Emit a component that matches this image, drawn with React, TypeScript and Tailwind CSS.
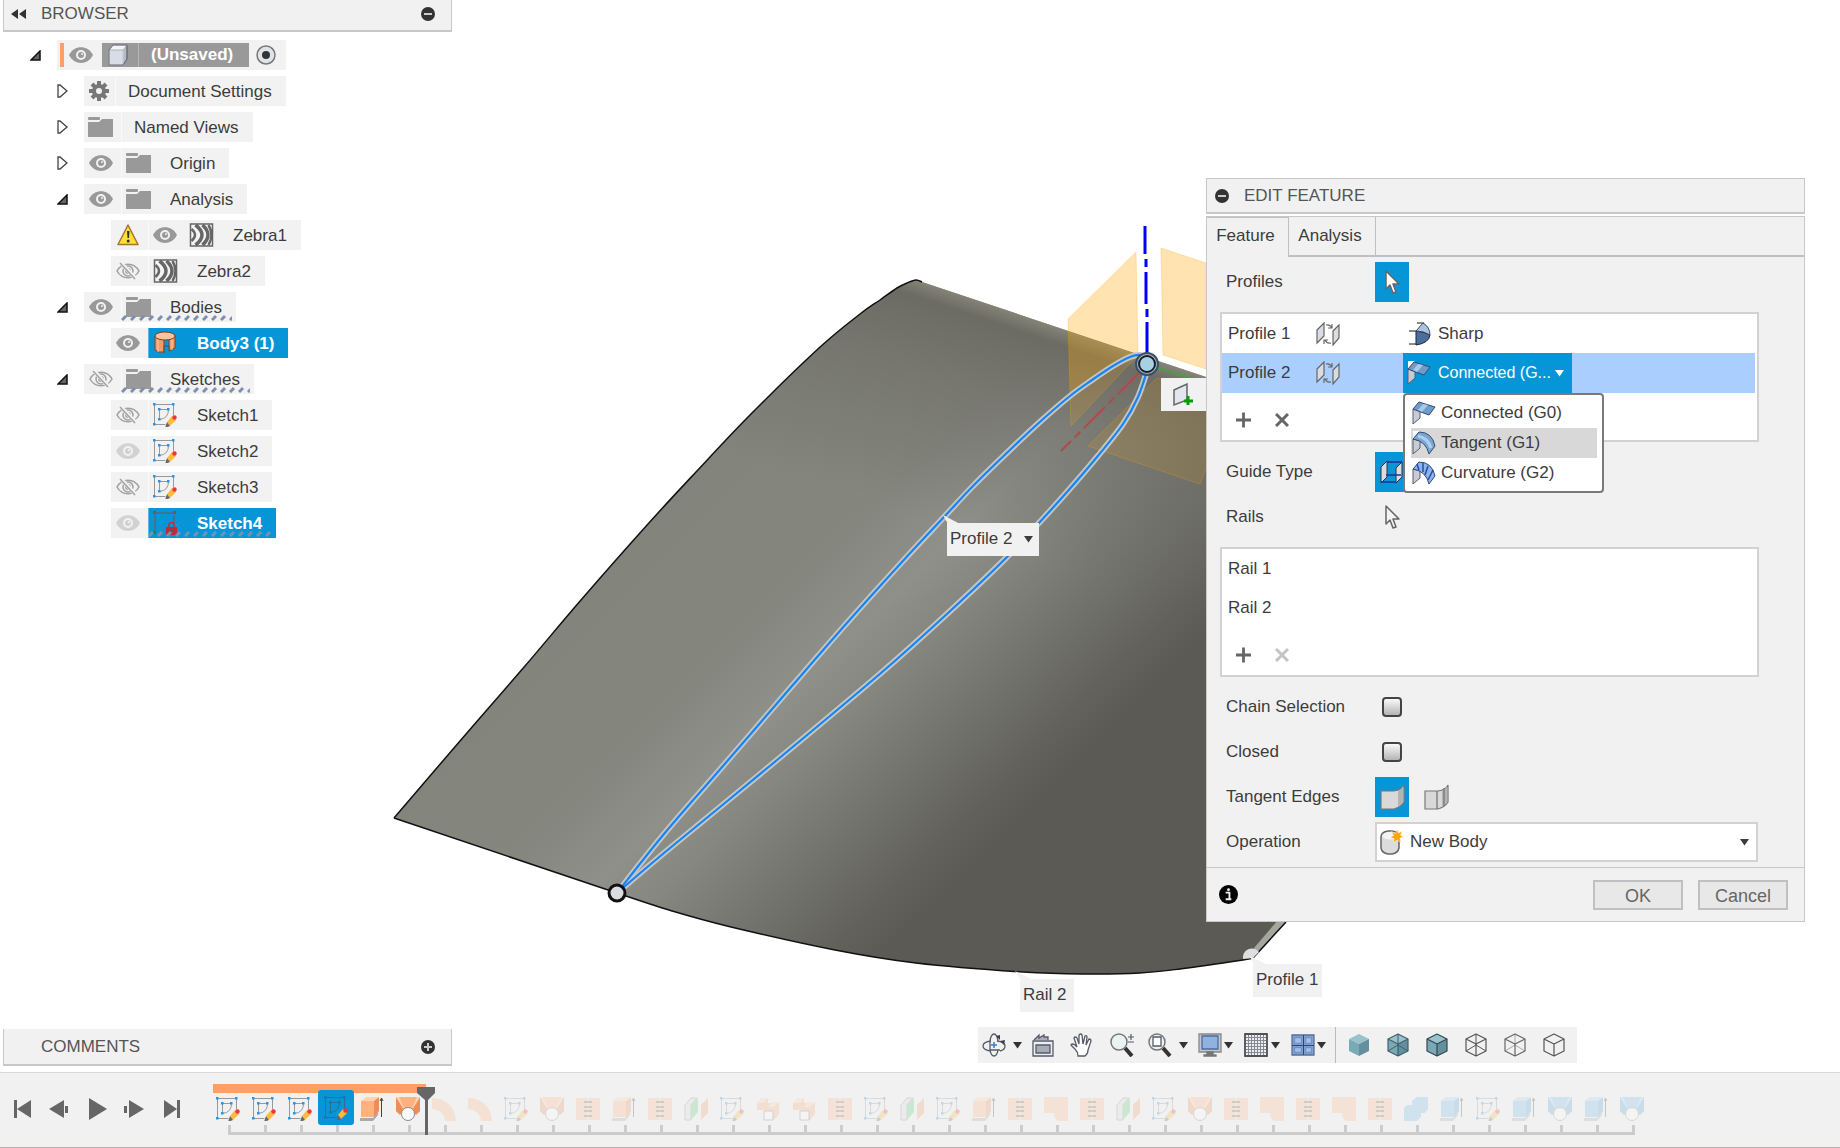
import { useState } from "react";
import type { ReactNode } from "react";
import clsx from "clsx";

type Point = [number, number];

/** Catmull-Rom spline through the points, as an SVG path */
function smoothPath(points: Point[], start = "M"): string {
  let d = `${start}${points[0][0]} ${points[0][1]}`;
  for (let i = 0; i < points.length - 1; i++) {
    const p0 = points[i - 1] ?? points[i];
    const p1 = points[i];
    const p2 = points[i + 1];
    const p3 = points[i + 2] ?? p2;
    const c1 = [p1[0] + (p2[0] - p0[0]) / 6, p1[1] + (p2[1] - p0[1]) / 6];
    const c2 = [p2[0] - (p3[0] - p1[0]) / 6, p2[1] - (p3[1] - p1[1]) / 6];
    d += `C${c1[0]} ${c1[1]} ${c2[0]} ${c2[1]} ${p2[0]} ${p2[1]}`;
  }
  return d;
}

const LEFT_EDGE: Point[] = [
  [394, 818], [460, 741], [525, 666], [581, 600], [648, 524], [696, 472], [750, 415],
  [819, 348], [860, 314], [880, 300], [897, 288], [907, 283], [916, 280], [922, 282],
];

const BOTTOM_EDGE: Point[] = [
  [617, 893], [672, 911], [731, 927], [835, 950], [916, 963], [1023, 972],
  [1087, 974], [1140, 973], [1180, 969], [1243, 960], [1253, 958],
];

const LOOP_UPPER: Point[] = [
  [617, 893], [664, 834], [723, 766], [792, 686], [846, 624], [902, 562], [944, 517],
  [974, 485], [1013, 447], [1042, 420], [1070, 396], [1092, 380], [1113, 366], [1130, 357],
  [1140, 355], [1147, 358],
];

const LOOP_LOWER: Point[] = [
  [1148, 368], [1138, 397], [1123, 424], [1097, 457], [1067, 492], [1038, 524], [1004, 560],
  [948, 613], [881, 673], [771, 765], [664, 853], [617, 893],
];

const SURFACE = `${smoothPath(LEFT_EDGE)}L1206 377L1320 415V880L1286 922L1253 958${smoothPath(
  [...BOTTOM_EDGE].reverse(),
  "L"
)}Z`;

function Scene() {
  const upper = smoothPath(LOOP_UPPER);
  const lower = smoothPath(LOOP_LOWER);
  return (
    <svg className="absolute inset-0 h-full w-full" aria-hidden="true">
      <defs>
        <linearGradient id="body" gradientUnits="userSpaceOnUse" x1="560" y1="571" x2="910" y2="928">
          <stop offset="0" stopColor="#82837b" />
          <stop offset="0.35" stopColor="#85867e" />
          <stop offset="0.5" stopColor="#8f9089" />
          <stop offset="0.6" stopColor="#86877f" />
          <stop offset="0.79" stopColor="#70716a" />
          <stop offset="0.92" stopColor="#62625b" />
          <stop offset="1" stopColor="#5b5a54" />
        </linearGradient>
        <linearGradient id="top" gradientUnits="userSpaceOnUse" x1="1000" y1="308" x2="928" y2="522">
          <stop offset="0" stopColor="#858376" stopOpacity="0.9" />
          <stop offset="0.07" stopColor="#68675f" stopOpacity="0.85" />
          <stop offset="0.4" stopColor="#6a6a63" stopOpacity="0.5" />
          <stop offset="1" stopColor="#6a6a63" stopOpacity="0" />
        </linearGradient>
      </defs>

      <path d={SURFACE} fill="url(#body)" />
      <path d={SURFACE} fill="url(#top)" />
      <path d="M1286 922l-30 32-2-6 24-28z" fill="#a5a69c" />

      {/* Origin planes */}
      <g fill="#ffa500" stroke="#ffa500" strokeOpacity="0.25">
        <path d="M1068 319L1136 252L1138 353L1113 366L1070 396Z" fillOpacity="0.3" />
        <path d="M1161 248L1206 263V369L1163 355Z" fillOpacity="0.3" />
        <path d="M1070 396L1113 366L1136 357L1071 426Z" fillOpacity="0.16" />
        <path d="M1157 378L1230 402L1200 484L1088 446Z" fillOpacity="0.13" />
      </g>

      {/* Axes */}
      <path d="M1139 373L1061 451" stroke="#b04a46" strokeWidth="2" strokeDasharray="30 5 8 5" />
      <path d="M1158 368L1190 378" stroke="#4c9c48" strokeWidth="2" />
      <path
        d="M1145 226v28M1146 259v8M1146 272v32M1147 309v8M1147 322v32"
        stroke="#0000ff"
        strokeWidth="3"
      />

      {/* Edges */}
      <g fill="none" stroke="#111" strokeWidth="1.500" strokeLinejoin="round">
        <path d={smoothPath(LEFT_EDGE)} />
        <path d={`M394 818${smoothPath(BOTTOM_EDGE, "L")}L1286 922`} />
      </g>
      <g fill="none" stroke="#c4c6c4" strokeWidth="6">
        <path d={upper} />
        <path d={lower} />
      </g>
      <g fill="none" stroke="#1684f5" strokeWidth="2.200">
        <path d={upper} />
        <path d={lower} />
      </g>

      <circle cx="617" cy="893" r="8" fill="#d9dde0" stroke="#111" strokeWidth="3" />
      <circle cx="1147" cy="364" r="11" fill="#a9b8c2" stroke="#3b5068" strokeWidth="2" />
      <circle cx="1147" cy="364" r="8" fill="#a9d0e2" stroke="#15202b" strokeWidth="2" />
      <path d="M1243 959a9 9 0 0 1 16 -7l-6 6z" fill="#dedede" />

      {/* Callout tails */}
      <g fill="#f1f1f1">
        <path d="M943 515L960 524H948z" />
        <path d="M1015 971L1034 980H1021z" />
        <path d="M1250 956L1268 965H1254z" />
      </g>
    </svg>
  );
}

/* ---------- Small shared icons ---------- */

function Caret({ className }: { className?: string }) {
  return (
    <svg width="9" height="8" viewBox="0 0 9 8" className={clsx("shrink-0", className)}>
      <path d="M0 1h9L4.500 7.500z" fill="currentColor" />
    </svg>
  );
}

function RoundSign({ plus }: { plus?: boolean }) {
  return (
    <svg width="14" height="14" viewBox="0 0 14 14">
      <circle cx="7" cy="7" r="7" fill="#333" />
      <path d={plus ? "M3 7h8M7 3v8" : "M3 7h8"} stroke="#ccc" strokeWidth="2" />
    </svg>
  );
}

function Eye({ faded }: { faded?: boolean }) {
  const color = faded ? "#d2d2d2" : "#999";
  return (
    <svg width="24" height="16" viewBox="0 0 24 16">
      <path d="M0 8C5-2.500 19-2.500 24 8 19 18.500 5 18.500 0 8z" fill={color} />
      <circle cx="12" cy="8" r="4" fill={color} stroke="#f2f2f2" strokeWidth="2" />
      <circle cx="13" cy="7" r="1" fill="#f2f2f2" />
    </svg>
  );
}

function EyeOff() {
  return (
    <svg width="24" height="18" viewBox="0 0 24 18" fill="none" stroke="#a0a0a0" strokeWidth="1.500">
      <path d="M1 9C6 0 18 0 23 9 18 18 6 18 1 9z" />
      <circle cx="12" cy="9" r="5" />
      <circle cx="12" cy="9" r="2.200" />
      <path d="M5 1l15 16" stroke="#f2f2f2" strokeWidth="4" />
      <path d="M4 1l15 16" />
    </svg>
  );
}

function Folder() {
  return (
    <svg width="25" height="20" viewBox="0 0 25 20" fill="#999">
      <rect x="0" y="0" width="12" height="3" rx="1" />
      <path d="M0 5h11l3-3h11v18H0z" />
    </svg>
  );
}

function Gear() {
  return (
    <svg width="20" height="20" viewBox="0 0 20 20">
      <g stroke="#777" strokeWidth="4">
        <path d="M10 0v20M0 10h20M3 3l14 14M17 3L3 17" />
      </g>
      <circle cx="10" cy="10" r="7" fill="#777" />
      <circle cx="10" cy="10" r="3" fill="#f2f2f2" />
    </svg>
  );
}

function Zebra() {
  return (
    <svg width="25" height="24" viewBox="0 0 24 24" fill="none" stroke="#666">
      <rect x="1" y="1" width="22" height="22" fill="#f4f4f4" strokeWidth="1.500" />
      <path d="M2 6q7 6 0 12" strokeWidth="2.500" />
      <path d="M6 2q13 10 0 20" strokeWidth="3.500" />
      <path d="M13 2q11 10 0 20" strokeWidth="3.500" />
      <path d="M19 2q6 10 0 20" strokeWidth="2.500" />
    </svg>
  );
}

function Warning() {
  return (
    <svg width="22" height="22" viewBox="0 0 22 22">
      <path d="M11 1L21 20.500H1z" fill="#ffdf35" stroke="#a5762d" strokeWidth="1.500" strokeLinejoin="round" />
      <path d="M10 7h2.500l-.5 7h-1.500z" fill="#333" />
      <circle cx="11.200" cy="17" r="1.500" fill="#333" />
    </svg>
  );
}

function Body() {
  return (
    <svg width="24" height="24" viewBox="0 0 24 24" stroke="#7b4020">
      <path d="M2 5v14q3 3 9 2V8h5v12l6-3V5z" fill="#f29b68" />
      <path d="M5 7v14M19 7v12" stroke="#ffc9a5" />
      <ellipse cx="12" cy="5" rx="10" ry="4" fill="#ffc49c" />
      <path d="M11 22v-7h5v5" fill="#0696d7" />
    </svg>
  );
}

function Cube() {
  return (
    <svg width="22" height="22" viewBox="0 0 22 22" stroke="#6b7078" strokeLinejoin="round">
      <path d="M2 6L6 1h14v14l-4 6H2z" fill="#b5bac4" />
      <path d="M2 6h14v15H2z" fill="#d7dce6" stroke="#c5cad4" />
      <path d="M2 6L6 1h14l-4 5z" fill="#f2f4f8" stroke="#aeb3bb" />
      <path d="M2 6L6 1h14v14l-4 6H2z" fill="none" />
    </svg>
  );
}

function Sketch({ dark }: { dark?: boolean }) {
  const line = dark ? "#2f6d92" : "#999";
  const dot = dark ? "#1676b5" : "#2196f3";
  return (
    <svg width="24" height="24" viewBox="0 0 24 24">
      <g fill="none" stroke={line} strokeWidth="1">
        <path d="M1.500 1.500h19M1.500 1.500v20M20.500 1.500v11M1.500 21.500h11" />
        <path d="M6.500 6.500h9M6.500 6.500v10M6.500 16.500q9-1 9-10" />
      </g>
      <path
        d="M0 0h2.500v2.500H0zM19 0h2.500v2.500h-2.500zM0 20h2.500v2.500H0zM5 5h2.500v2.500H5zM14 5h2.500v2.500h-2.500zM5 15h2.500v2.500H5z"
        fill={dot}
      />
      <path d="M19 13l4 4-6 6-3-4z" fill="#fdbb3c" />
      <path d="M14 19l3 4-5 2z" fill="#666" />
      <circle cx="21.500" cy="14.500" r="2.200" fill="#f4323c" />
    </svg>
  );
}

function SketchLocked() {
  return (
    <svg width="25" height="24" viewBox="0 0 25 24" fill="none">
      <path d="M2 2h18M2 4v18M21 4v9" stroke="#56697a" strokeWidth="1.500" />
      <path d="M0 0h3v3H0zM20 0h3v3h-3zM0 20h3v3H0z" fill="#6b5a5a" />
      <path d="M16 16v-3q2.500-3 5 0v3" stroke="#d6202c" strokeWidth="1.500" />
      <rect x="13" y="16" width="11" height="8" fill="#c3283a" />
      <rect x="17" y="18" width="3" height="3" fill="#5a4d8b" />
    </svg>
  );
}

/* ---------- Browser tree ---------- */

interface TreeRow {
  label: string;
  level: 1 | 2;
  open?: boolean;
  icons: ReactNode[];
  narrow?: boolean;
  hatched?: boolean;
  selected?: boolean;
}

const TREE: TreeRow[] = [
  { label: "Document Settings", level: 1, open: false, icons: [<Gear />], narrow: true },
  { label: "Named Views", level: 1, open: false, icons: [<Folder />] },
  { label: "Origin", level: 1, open: false, icons: [<Eye />, <Folder />] },
  { label: "Analysis", level: 1, open: true, icons: [<Eye />, <Folder />] },
  { label: "Zebra1", level: 2, icons: [<Warning />, <Eye />, <Zebra />] },
  { label: "Zebra2", level: 2, icons: [<EyeOff />, <Zebra />] },
  { label: "Bodies", level: 1, open: true, icons: [<Eye />, <Folder />], hatched: true },
  { label: "Body3 (1)", level: 2, icons: [<Eye />, <Body />], selected: true },
  { label: "Sketches", level: 1, open: true, icons: [<EyeOff />, <Folder />], hatched: true },
  { label: "Sketch1", level: 2, icons: [<EyeOff />, <Sketch />] },
  { label: "Sketch2", level: 2, icons: [<Eye faded />, <Sketch />] },
  { label: "Sketch3", level: 2, icons: [<EyeOff />, <Sketch />] },
  { label: "Sketch4", level: 2, icons: [<Eye faded />, <SketchLocked />], selected: true, hatched: true },
];

function Expander({ open }: { open: boolean }) {
  return (
    <button type="button" aria-label={open ? "Collapse" : "Expand"} className="flex w-[11px] justify-center">
      {open ? (
        <svg width="11" height="11" viewBox="0 0 11 11">
          <path d="M10 1v9H1z" fill="#666" stroke="#111" strokeWidth="1.500" />
        </svg>
      ) : (
        <svg width="11" height="14" viewBox="0 0 11 14">
          <path d="M1 1h2l7 6-7 6H1z" fill="#fff" stroke="#444" strokeWidth="1.300" />
        </svg>
      )}
    </button>
  );
}

function Hatch() {
  return (
    <svg className="absolute bottom-[1px] left-[37px] h-[7px] w-[calc(100%-41px)]">
      <defs>
        <pattern id="hatch" width="9" height="7" patternUnits="userSpaceOnUse">
          <path d="M1 6l4-4" stroke="#7d8fb0" strokeWidth="3" />
        </pattern>
      </defs>
      <rect width="100%" height="7" fill="url(#hatch)" />
    </svg>
  );
}

function Row({ row }: { row: TreeRow }) {
  const [first, ...rest] = row.icons;
  return (
    <li className={clsx("flex h-[30px] items-center", row.level === 1 ? "pl-[54px]" : "pl-[108px]")}>
      {row.open !== undefined && <Expander open={row.open} />}
      <div className={clsx("relative flex h-full bg-[#f2f2f2]", row.level === 1 && "ml-4")}>
        <span
          className={clsx(
            "flex items-center justify-center",
            row.narrow ? "w-[31px] pr-[2px]" : "w-[37px] pr-1"
          )}
        >
          {first}
        </span>
        <span
          className={clsx(
            "flex items-center border-l pr-[14px]",
            row.selected ? "border-[#5ab8e6] bg-[#0696d7] font-bold text-white" : "border-[#fafafa]"
          )}
        >
          {rest.map((icon, i) => (
            <span key={i} className="flex w-9 items-center justify-center pr-1">
              {icon}
            </span>
          ))}
          <span className="pt-[1px] pl-3">{row.label}</span>
        </span>
        {row.hatched && <Hatch />}
      </div>
    </li>
  );
}

function Browser() {
  return (
    <section>
      <header className="flex h-8 items-center border border-t-0 border-b-2 border-[#c8c8c8] bg-[#f1f1f1] pr-[16px] pb-[3px] pl-[7px]">
        <button type="button" aria-label="Collapse browser">
          <svg width="15" height="10" viewBox="0 0 15 10" fill="#333">
            <path d="M7 0v10L0 5zM15 0v10L8 5z" />
          </svg>
        </button>
        <h2 className="ml-[15px] flex-1 text-[#555]">BROWSER</h2>
        <button type="button" aria-label="Minimize">
          <RoundSign />
        </button>
      </header>
      <ul className="mt-2 flex flex-col gap-[6px]">
        <li className="flex h-[30px] items-center pl-[27px]">
          <Expander open />
          <div className="ml-4 flex h-full items-center bg-[#f2f2f2] pl-[3px]">
            <span className="h-6 w-1 bg-[#ff9f68]" />
            <span className="flex w-[38px] justify-center pr-1">
              <Eye />
            </span>
            <span className="flex h-6 items-center bg-[#999] font-bold text-white">
              <span className="flex h-full w-[37px] items-center justify-center border-r border-[#b5b5b5] pr-1">
                <Cube />
              </span>
              <span className="pr-[16px] pl-3">(Unsaved)</span>
            </span>
            <span className="flex w-[37px] justify-center pr-1">
              <svg width="20" height="20" viewBox="0 0 20 20">
                <circle cx="10" cy="10" r="9" fill="#dfe3ea" stroke="#777" strokeWidth="1.500" />
                <circle cx="10" cy="10" r="4" fill="#333" />
              </svg>
            </span>
          </div>
        </li>
        {TREE.map((row) => (
          <Row key={row.label} row={row} />
        ))}
      </ul>
    </section>
  );
}

/* ---------- Edit feature dialog ---------- */

function CursorArrow({ filled }: { filled?: boolean }) {
  return (
    <svg width="15" height="24" viewBox="0 0 15 24">
      <path
        d="M1 1v18l4-4 3 8 3-1-3-8h6z"
        fill={filled ? "#fff" : "#f4f4f4"}
        stroke="#666"
        strokeWidth="1.500"
        strokeLinejoin="round"
      />
    </svg>
  );
}

function Flip() {
  return (
    <svg width="24" height="24" viewBox="0 0 24 24" stroke="#666" strokeWidth="1.200" fill="#d9dce2">
      <path d="M1 8l7-7v13l-7 7zM17 9l6-6v13l-6 7z" />
      <path d="M10 3q4-1 6 3M16 2v4h-4M15 21q-4 1-6-3M8 22v-4h4" fill="none" />
    </svg>
  );
}

function Sharp() {
  return (
    <svg width="22" height="24" viewBox="0 0 22 24">
      <path d="M0 9h9M0 22h9M8 1h7" stroke="#666" strokeWidth="1.500" />
      <path d="M7 9q9 1 14 4-1 8-14 10z" fill="#4a6f9c" stroke="#223" />
      <path d="M7 9L14 1q7 4 7 12-6-4-14-4z" fill="#a6c4e6" stroke="#445" />
    </svg>
  );
}

function Continuity({ kind }: { kind: "g0" | "g1" | "g2" }) {
  return (
    <svg width="24" height="24" viewBox="0 0 24 24" strokeLinejoin="round" className="shrink-0">
      <path d="M1 0h7L1 8z" fill="#fff" />
      <path d="M1 8l7 2v7l-7 6z" fill="#c9ccd4" stroke="#555b68" />
      {kind === "g0" ? (
        <>
          <path d="M1 8L7 1l16 5-6 8L6 10z" fill="#6f9bcb" stroke="#2f4d72" />
          <path d="M11 3L6 9l4 2 6-7z" fill="#a9c9ea" />
        </>
      ) : (
        <>
          <path
            d="M1 8L7 1q13 0 16 14l-6 8Q14 10 1 8z"
            fill={kind === "g1" ? "#7ba6d4" : "#8fb2ea"}
            stroke="#2f4d72"
          />
          {kind === "g1" ? (
            <path d="M6 5q10 2 13 12" fill="none" stroke="#b0cfee" strokeWidth="3" />
          ) : (
            <path d="M5 3l2 6M11 2v9M16 5l-3 9M21 9l-5 10" stroke="#1f4fae" strokeWidth="1.500" />
          )}
        </>
      )}
    </svg>
  );
}

function RailGuide() {
  return (
    <svg width="24" height="24" viewBox="0 0 24 24">
      <path d="M1 7l6-6v16l-6 6zM16 8l6-6v15l-6 6z" fill="#d9dce2" stroke="#333" />
      <path d="M7 2h15M1 22h15M6 15h15" stroke="#1d2f9e" strokeWidth="1.500" />
    </svg>
  );
}

function TangentEdge({ split }: { split?: boolean }) {
  return (
    <svg width="25" height="26" viewBox="0 0 25 26">
      <path d="M1 7h13q8-1 10-6v17q-3 5-10 7H1z" fill="#d9d9d9" stroke="#777" strokeWidth="1.200" />
      <path d="M18 7q4-2 5-5v16q-2 3-5 5z" fill="#b4b4b4" />
      {split && <path d="M13 7v18M20 4v18" stroke="#777" strokeWidth="1.300" />}
    </svg>
  );
}

function NewBody() {
  return (
    <svg width="24" height="26" viewBox="0 0 24 26">
      <path
        d="M2 8q0-5 7-6h4q7 1 7 6v11q-1 5-7 6H9q-6-1-7-6z"
        fill="#dcdcdc"
        stroke="#666"
        strokeWidth="1.500"
      />
      <path d="M3 8q8 5 16 0-1-5-8-5T3 8z" fill="#f3f3f3" />
      <path
        d="M18 0l1.500 4 4-2-2 4 3 2-3.500 1 1 4.500-4-2.500-3 3 0-4.500-4-1 3.500-2-2-4 4 2z"
        fill="#ffa50a"
        stroke="#fff"
        strokeWidth=".5"
      />
    </svg>
  );
}

function FormRow({ label, htmlFor, children }: { label: string; htmlFor?: string; children: ReactNode }) {
  return (
    <div className="flex h-10 items-center pl-[6px]">
      <label htmlFor={htmlFor} className="w-[149px]">
        {label}
      </label>
      {children}
    </div>
  );
}

function ListActions({ removable }: { removable?: boolean }) {
  return (
    <div className="flex items-center gap-[24px] px-[14px] pt-[19px]">
      <button type="button" aria-label="Add" className="text-[#666]">
        <svg width="15" height="16" viewBox="0 0 16 16" stroke="currentColor" strokeWidth="3">
          <path d="M8 0v16M0 8h16" />
        </svg>
      </button>
      <button
        type="button"
        aria-label="Remove"
        disabled={!removable}
        className={removable ? "text-[#666]" : "text-[#c4c4c4]"}
      >
        <svg width="14" height="14" viewBox="0 0 14 14" stroke="currentColor" strokeWidth="3">
          <path d="M1 1l12 12M13 1L1 13" />
        </svg>
      </button>
    </div>
  );
}

const CONTINUITY = [
  { kind: "g0", label: "Connected (G0)" },
  { kind: "g1", label: "Tangent (G1)" },
  { kind: "g2", label: "Curvature (G2)" },
] as const;

function ProfileList() {
  const [hovered, setHovered] = useState<string>("g1");
  return (
    <div className="my-[5px] h-[130px] w-[539px] border-2 border-[#d2d2d2] bg-white">
      <div className="flex h-[39px] items-center pl-[6px]">
        <span className="w-[88px]">Profile 1</span>
        <Flip />
        <span className="ml-[69px] flex items-center gap-[7px]">
          <Sharp />
          Sharp
        </span>
      </div>
      <div className="mr-[2px] flex h-10 items-center bg-[#aacfff] pl-[6px]">
        <span className="w-[88px]">Profile 2</span>
        <Flip />
        <div className="relative ml-[63px] h-10">
          <button
            type="button"
            aria-haspopup="listbox"
            aria-expanded="true"
            className="flex h-10 w-[169px] items-center justify-between bg-[#0696d7] pr-[8px] pl-1 text-base text-white"
          >
            <span className="flex items-center gap-[7px] whitespace-nowrap">
              <Continuity kind="g0" />
              Connected (G...
            </span>
            <Caret />
          </button>
          <ul
            role="listbox"
            className="absolute top-full left-0 z-10 w-[201px] rounded-sm border-2 border-[#7a7a7a] bg-white py-[3px] pr-[5px] pl-[6px]"
          >
            {CONTINUITY.map((item) => (
              <li
                key={item.kind}
                role="option"
                aria-selected={item.kind === "g0"}
                onMouseEnter={() => setHovered(item.kind)}
                className={clsx(
                  "flex h-[30px] items-center gap-[5px] pl-[1px]",
                  hovered === item.kind && "bg-[#d8d8d8]"
                )}
              >
                <Continuity kind={item.kind} />
                {item.label}
              </li>
            ))}
          </ul>
        </div>
      </div>
      <ListActions removable />
    </div>
  );
}

function EditFeature() {
  return (
    <section className="relative w-[599px] self-end text-[#3c3c3c]">
      <header className="flex h-9 items-center gap-[15px] border border-b-2 border-[#c8c8c8] bg-[#f1f1f1] pl-2">
        <button type="button" aria-label="Collapse">
          <RoundSign />
        </button>
        <h2 className="text-[#555]">EDIT FEATURE</h2>
      </header>
      <div className="mt-[2px] border border-[#c8c8c8] bg-[#f1f1f1]">
        <div role="tablist" className="flex h-10">
          <button
            type="button"
            role="tab"
            aria-selected="true"
            className="w-[82px] border-t border-r border-[#c0c0c0] pr-1 pb-[3px]"
          >
            Feature
          </button>
          <div className="flex flex-1 border-b-2 border-[#c0c0c0]">
            <button type="button" role="tab" aria-selected="false" className="w-[87px] border-r border-[#c0c0c0] pr-1">
              Analysis
            </button>
          </div>
        </div>
        <div className="flex flex-col gap-[5px] pt-[5px] pr-[46px] pb-[5px] pl-[13px]">
          <FormRow label="Profiles">
            <button type="button" aria-label="Select profiles" className="flex h-10 w-[34px] items-center justify-center bg-[#0696d7]">
              <CursorArrow filled />
            </button>
          </FormRow>
          <ProfileList />
          <FormRow label="Guide Type">
            <button type="button" aria-label="Rails" className="flex h-10 w-[34px] items-center justify-center bg-[#0696d7]">
              <RailGuide />
            </button>
          </FormRow>
          <FormRow label="Rails">
            <button type="button" aria-label="Select rails" className="flex h-10 w-[34px] items-center justify-center">
              <CursorArrow />
            </button>
          </FormRow>
          <div className="my-[5px] h-[130px] w-[539px] border-2 border-[#d2d2d2] bg-white">
            <div className="flex h-[39px] items-center pl-[6px]">Rail 1</div>
            <div className="flex h-10 items-center pl-[6px]">Rail 2</div>
            <ListActions />
          </div>
          <FormRow label="Chain Selection" htmlFor="chain">
            <input
              id="chain"
              type="checkbox"
              className="ml-[7px] h-5 w-5 appearance-none rounded border-2 border-[#444] bg-linear-to-b from-[#fafafa] to-[#b4b4b4]"
            />
          </FormRow>
          <FormRow label="Closed" htmlFor="closed">
            <input
              id="closed"
              type="checkbox"
              className="ml-[7px] h-5 w-5 appearance-none rounded border-2 border-[#444] bg-linear-to-b from-[#fafafa] to-[#b4b4b4]"
            />
          </FormRow>
          <FormRow label="Tangent Edges">
            <button type="button" aria-label="Merge" className="flex h-10 w-[34px] items-center justify-center bg-[#0696d7]">
              <TangentEdge />
            </button>
            <button type="button" aria-label="Keep" className="ml-[10px] flex h-10 w-[34px] items-center justify-center">
              <TangentEdge split />
            </button>
          </FormRow>
          <FormRow label="Operation" htmlFor="operation">
            <div className="relative flex h-10 flex-1 items-center">
              <select
                id="operation"
                className="h-full w-full appearance-none border-2 border-[#d2d2d2] bg-white pl-[33px]"
              >
                <option>New Body</option>
              </select>
              <span className="pointer-events-none absolute left-[4px]">
                <NewBody />
              </span>
              <Caret className="pointer-events-none absolute right-[9px]" />
            </div>
          </FormRow>
        </div>
      </div>
      <footer className="flex h-[54px] items-center border border-t-0 border-[#c8c8c8] bg-[#f1f1f1] pr-[16px] pl-[12px] text-lg text-[#666]">
        <button type="button" aria-label="Information">
          <svg width="19" height="19" viewBox="0 0 20 20">
            <circle cx="10" cy="10" r="10" fill="#000" />
            <path d="M7 8h4v7M7 15h6" stroke="#eee" strokeWidth="2" fill="none" />
            <circle cx="10" cy="5" r="1.500" fill="#eee" />
          </svg>
        </button>
        <button type="button" className="ml-auto h-[30px] w-[90px] border-2 border-[#c0c0c0] bg-[#e8e8e8]">
          OK
        </button>
        <button type="button" className="ml-[15px] h-[30px] w-[90px] border-2 border-[#c0c0c0] bg-[#e8e8e8]">
          Cancel
        </button>
      </footer>
    </section>
  );
}

/* ---------- Navigation bar ---------- */

function VisualCube({ fill, edges, inner }: { fill?: boolean; edges?: string; inner?: string }) {
  return (
    <svg width="24" height="24" viewBox="0 0 24 24" fill="none" strokeLinejoin="round">
      {fill && (
        <>
          <path d="M2 6l10-5 10 5-10 5z" fill="#98c2cc" />
          <path d="M2 6l10 5v12L2 18z" fill="#7aa9b6" />
          <path d="M22 6l-10 5v12l10-5z" fill="#648f9e" />
        </>
      )}
      {inner && <path d="M12 1v11L2 18M12 12l10 6" stroke={inner} />}
      {edges && (
        <path d="M12 1l10 5v12l-10 5-10-5V6zM2 6l10 5 10-5M12 11v12" stroke={edges} strokeWidth="1.200" />
      )}
    </svg>
  );
}

const NAV_ITEMS: { label: string; menu?: boolean; className: string; icon: ReactNode }[] = [
  {
    label: "Orbit",
    menu: true,
    className: "gap-[7px] mr-[9px]",
    icon: (
      <>
        <path d="M9 18q-8-1-8-5t8-5M15 8q8 1 8 5t-5 5" />
        <path d="M8 17V8q1-7 4-7t4 7M16 17q-1 6-4 6t-4-6h10" />
        <path d="M14 3l4-1v5zM18 8l5-1-1 5z" fill="#3a3f4a" stroke="none" />
        <path d="M12 9v6M9 12h6" stroke="#2f7fd6" strokeWidth="1.500" />
      </>
    ),
  },
  {
    label: "Look At",
    className: "mr-[15px]",
    icon: (
      <>
        <path d="M3 7l5-5v3l5-3v2h4v3" fill="#a9adb8" />
        <path d="M2 8h20v15H2z" fill="#eceef2" />
        <path d="M5 12h14v8H5z" fill="#a7acb8" />
      </>
    ),
  },
  {
    label: "Pan",
    className: "mr-[16px]",
    icon: (
      <path
        d="M8 23q0-4-3-7L1 12q1-2 4 0l2 2L4 5q1-2 3 0l2 6V2q2-2 3 0l1 9 2-8q2-1 2 1l-1 8 3-6q2 0 2 2l-3 9q0 4-3 6z"
        fill="#fff"
      />
    ),
  },
  {
    label: "Zoom",
    className: "mr-[14px]",
    icon: (
      <>
        <path d="M15 15l7 8" stroke="#333" strokeWidth="4" />
        <circle cx="9" cy="9" r="8" fill="#e9f4f2" stroke="#777" strokeWidth="1.500" />
        <path d="M18 4h6M21 1v6M18 9h6" strokeWidth="1.200" />
      </>
    ),
  },
  {
    label: "Fit",
    menu: true,
    className: "gap-[7px] mr-[10px]",
    icon: (
      <>
        <path d="M15 15l7 8" stroke="#333" strokeWidth="4" />
        <circle cx="9" cy="9" r="8" fill="#e9f4f2" stroke="#777" strokeWidth="1.500" />
        <path d="M5 4h8v9H5z" fill="#fff" />
      </>
    ),
  },
  {
    label: "Display Settings",
    menu: true,
    className: "gap-[2px] mr-[11px]",
    icon: (
      <>
        <path d="M1 1h22v18H1z" fill="#c3c6cd" stroke="#888" />
        <path d="M4 3h16v13H4z" fill="#8fb2e0" stroke="#4b6d9e" />
        <path d="M9 19h6v3h3v1H6v-1h3z" fill="#777" stroke="#777" />
      </>
    ),
  },
  {
    label: "Grid and Snaps",
    menu: true,
    className: "gap-[3px] mr-[11px]",
    icon: (
      <>
        <path d="M1 1h22v22H1z" fill="#fff" />
        <path
          d="M4.500 1v22M7.500 1v22M10.500 1v22M13.500 1v22M16.500 1v22M19.500 1v22M1 4.500h22M1 7.500h22M1 10.500h22M1 13.500h22M1 16.500h22M1 19.500h22"
          strokeWidth="1"
          stroke="#8a8e99"
        />
        <path d="M1 1h22v22H1z" fill="#555b6b" fillOpacity=".1" stroke="#444" />
      </>
    ),
  },
  {
    label: "Viewports",
    menu: true,
    className: "gap-[2px] mr-[9px]",
    icon: (
      <>
        <path d="M1 2h22v20H1z" fill="#83a3d2" stroke="#5a6f94" />
        <path d="M3.500 4.500h7v6h-7zM14.500 4.500h6v6h-6zM3.500 14.500h7v5h-7zM14.500 14.500h6v5h-6z" fill="#a3bfe8" stroke="#6f92c8" />
        <path d="M12.500 2v20M1 12.500h22" stroke="#2f4470" strokeWidth="1" />
      </>
    ),
  },
];

const CUBES = [
  <VisualCube fill />,
  <VisualCube fill edges="#41606b" inner="#41606b" />,
  <VisualCube fill edges="#33474f" />,
  <VisualCube edges="#555" inner="#555" />,
  <VisualCube edges="#666" inner="#aaa" />,
  <VisualCube edges="#555" />,
];

function NavBar() {
  return (
    <nav className="mr-[263px] mb-[9px] flex h-9 items-center self-end bg-[#f1f1f1] pr-[11px] pl-1 text-[#333]">
      {NAV_ITEMS.map((item) => (
        <button
          key={item.label}
          type="button"
          aria-label={item.label}
          className={clsx("flex items-center", item.className)}
        >
          <svg width="24" height="24" viewBox="0 0 24 24" fill="none" stroke="#555b68" strokeWidth="1.300">
            {item.icon}
          </svg>
          {item.menu && <Caret />}
        </button>
      ))}
      <span className="h-full w-px bg-[#bbb]" />
      <span className="flex gap-[15px] pl-[11px]">
        {CUBES.map((cube, i) => (
          <button key={i} type="button" aria-label={`Visual style ${i + 1}`}>
            {cube}
          </button>
        ))}
      </span>
    </nav>
  );
}

/* ---------- Timeline ---------- */

type Tone = { light: string; mid: string; dark: string };
const ORANGE: Tone = { light: "#ffd2b0", mid: "#ffb27e", dark: "#ea8f5c" };
const BLUE: Tone = { light: "#a4d3f2", mid: "#6fb7e6", dark: "#5a9fcc" };

function Extrude({ tone }: { tone: Tone }) {
  return (
    <svg width="24" height="24" viewBox="0 0 24 24">
      <path d="M0 21h13l5-6v3l-5 6H0z" fill="#aaa" />
      <path d="M1 4h13v16H1z" fill={tone.mid} />
      <path d="M1 4l5-4h13l-5 4z" fill={tone.light} />
      <path d="M14 4l5-4v14l-5 6z" fill={tone.dark} />
      <path d="M21.500 2v18M20 4l1.500-3L23 4" stroke="#444" fill="none" />
    </svg>
  );
}

function Loft({ tone }: { tone: Tone }) {
  return (
    <svg width="24" height="24" viewBox="0 0 24 24">
      <path d="M0 0h24v14l-5 4H5l-5-4z" fill={tone.mid} />
      <path d="M0 0l7 12-3 6-4-4zM24 0l-7 12 3 6 4-4z" fill={tone.dark} />
      <path d="M0 0h24l-7 11H7z" fill={tone.light} />
      <path d="M3 0h18l-5 11H8z" fill={tone.mid} />
      <circle cx="12" cy="17" r="6.500" fill="#fff" stroke="#888" />
    </svg>
  );
}

const FEATURES = {
  sketch: <Sketch />,
  extrude: <Extrude tone={ORANGE} />,
  loft: <Loft tone={ORANGE} />,
  blueExtrude: <Extrude tone={BLUE} />,
  blueLoft: <Loft tone={BLUE} />,
  sweep: (
    <svg width="24" height="24" viewBox="0 0 24 24">
      <path d="M0 1q22 1 24 23H13Q12 13 0 12z" fill="#ffb27e" />
    </svg>
  ),
  stitch: (
    <svg width="24" height="24" viewBox="0 0 24 24">
      <path d="M0 1h11.500v22H0zM12.500 1H24v22H12.500z" fill="#fdb48c" />
      <path d="M8 5h8M8 10h8M8 14h8M8 19h8" stroke="#444" strokeWidth="1.500" />
    </svg>
  ),
  mirror: (
    <svg width="24" height="24" viewBox="0 0 24 24">
      <path d="M1 8l6-7h6l-6 7v15H1z" fill="#ddd" stroke="#888" />
      <path d="M7 8l7-7v14l-7 8z" fill="#5bcb7b" />
      <path d="M17 8l7-7v15l-7 7z" fill="#f29b68" />
    </svg>
  ),
  combine: (
    <svg width="24" height="24" viewBox="0 0 24 24">
      <path d="M1 6l5-5h6v5h11v11l-5 6h-9V13H1z" fill="#f9a878" />
      <path d="M1 6l5-5h6l-4 5zM12 10l4-5h7l-5 5z" fill="#ffd2b0" />
      <path d="M8 14h9v9H8z" fill="#fff" stroke="#777" />
    </svg>
  ),
  corner: (
    <svg width="24" height="24" viewBox="0 0 24 24">
      <path d="M0 0h24v24h-9q-5-1-5-8H0z" fill="#ffb98a" />
    </svg>
  ),
  join: (
    <svg width="24" height="24" viewBox="0 0 24 24">
      <path d="M0 11l3-3h5V4l5-4h11v12l-3 4h-4v4l-4 4H0z" fill="#6fb7e6" />
    </svg>
  ),
};

const TIMELINE: (keyof typeof FEATURES)[] = [
  "sketch", "sketch", "sketch", "sketch", "extrude", "loft", "sweep", "sweep", "sketch", "loft",
  "stitch", "extrude", "stitch", "mirror", "sketch", "combine", "combine", "stitch", "sketch", "mirror",
  "sketch", "extrude", "stitch", "corner", "stitch", "mirror", "sketch", "loft", "stitch", "corner",
  "stitch", "corner", "stitch", "join", "blueExtrude", "sketch", "blueExtrude", "blueLoft", "blueExtrude", "blueLoft",
];

const SELECTED_STEP = 3;
const CURRENT_STEP = 6;

const PLAYBACK = [
  { label: "Go to start", d: "M4 3h3v18H4zM21 3v18L7 12z" },
  { label: "Step back", d: "M17 3v18L2 12zM18 9h3v7h-3z" },
  { label: "Play", d: "M5 1v22l18-11z" },
  { label: "Step forward", d: "M3 9h3v7H3zM8 3v18l15-9z" },
  { label: "Go to end", d: "M6 3v18l13-9zM19 3h3v18h-3z" },
];

function Timeline() {
  return (
    <footer className="flex h-[76px] border-t border-b border-t-[#d8d8d8] border-b-[#b8b0b0] bg-[#f1f1f1]">
      <div className="flex w-[210px] shrink-0 items-center gap-[13px] pb-[3px] pl-[10px]">
        {PLAYBACK.map((item) => (
          <button key={item.label} type="button" aria-label={item.label}>
            <svg width="24" height="24" viewBox="0 0 24 24" fill="#666">
              <path d={item.d} />
            </svg>
          </button>
        ))}
      </div>
      <div className="relative mt-[11px]">
        <ol className="flex">
          {TIMELINE.map((name, i) => (
            <li key={i} className="group flex w-9 flex-col">
              <span className={clsx("h-[9px] group-first:ml-[3px]", i < CURRENT_STEP && "bg-[#ff9f68]")} />
              <span
                className={clsx(
                  "flex items-center justify-center",
                  i === SELECTED_STEP ? "-mt-[3px] h-[35px] rounded-[3px] bg-[#0696d7]" : "h-8 pb-[1px]",
                  i >= CURRENT_STEP && "opacity-25"
                )}
              >
                {i === SELECTED_STEP ? <Sketch dark /> : FEATURES[name]}
              </span>
              <span className="ml-[18px] h-[7px] w-[3px] bg-[#ccc]" />
              <span className="h-[3px] bg-[#ccc] group-first:ml-[18px] group-last:mr-[15px]" />
            </li>
          ))}
        </ol>
        <svg width="18" height="48" viewBox="0 0 18 48" fill="#666" className="absolute top-[3px] left-[207px]">
          <path d="M0 0h18v6l-7 7v35H8V13L0 6z" />
        </svg>
      </div>
    </footer>
  );
}

export default function App() {
  return (
    <div className="flex min-h-screen flex-col overflow-hidden bg-white font-['Liberation_Sans',Arial,sans-serif] text-[17px] leading-5 text-[#3c3c3c]">
      <main className="relative flex flex-1">
        <Scene />

        {/* Labels pinned to the model */}
        <button
          type="button"
          className="absolute top-[523px] left-[947px] flex h-[33px] w-[92px] items-center justify-between bg-[#f1f1f1] pr-[6px] pb-[2px] pl-[3px]"
        >
          Profile 2 <Caret />
        </button>
        <span className="absolute top-[979px] left-[1020px] h-[33px] w-[54px] bg-[#f1f1f1] pt-[6px] pl-[3px]">
          Rail 2
        </span>
        <span className="absolute top-[964px] left-[1253px] h-[33px] w-[69px] bg-[#f1f1f1] pt-[6px] pl-[3px]">
          Profile 1
        </span>
        <button
          type="button"
          aria-label="Add plane"
          className="absolute top-[378px] left-[1161px] flex h-[33px] w-[46px] items-center bg-[#f1f1f1] pl-[11px]"
        >
          <svg width="22" height="24" viewBox="0 0 22 24">
            <path d="M2 7l13-6v16L2 22z" fill="#e3e6ee" stroke="#666" strokeWidth="1.500" />
            <path d="M16 13v9M12 18h9" stroke="#0a9a0a" strokeWidth="3" />
          </svg>
        </button>

        <div className="relative flex w-[452px] shrink-0 flex-col justify-between pb-[6px] pl-[3px]">
          <Browser />
          <header className="flex h-[37px] items-center border border-t-0 border-b-2 border-[#c8c8c8] bg-[#f1f1f1] pr-[16px] pl-[37px]">
            <h2 className="flex-1 text-[#555]">COMMENTS</h2>
            <button type="button" aria-label="Expand comments">
              <RoundSign plus />
            </button>
          </header>
        </div>
        <div className="pointer-events-none relative flex flex-1 flex-col justify-between pt-[178px]">
          <div className="pointer-events-auto mr-[35px] flex flex-col">
            <EditFeature />
          </div>
          <NavBar />
        </div>
      </main>
      <Timeline />
    </div>
  );
}
